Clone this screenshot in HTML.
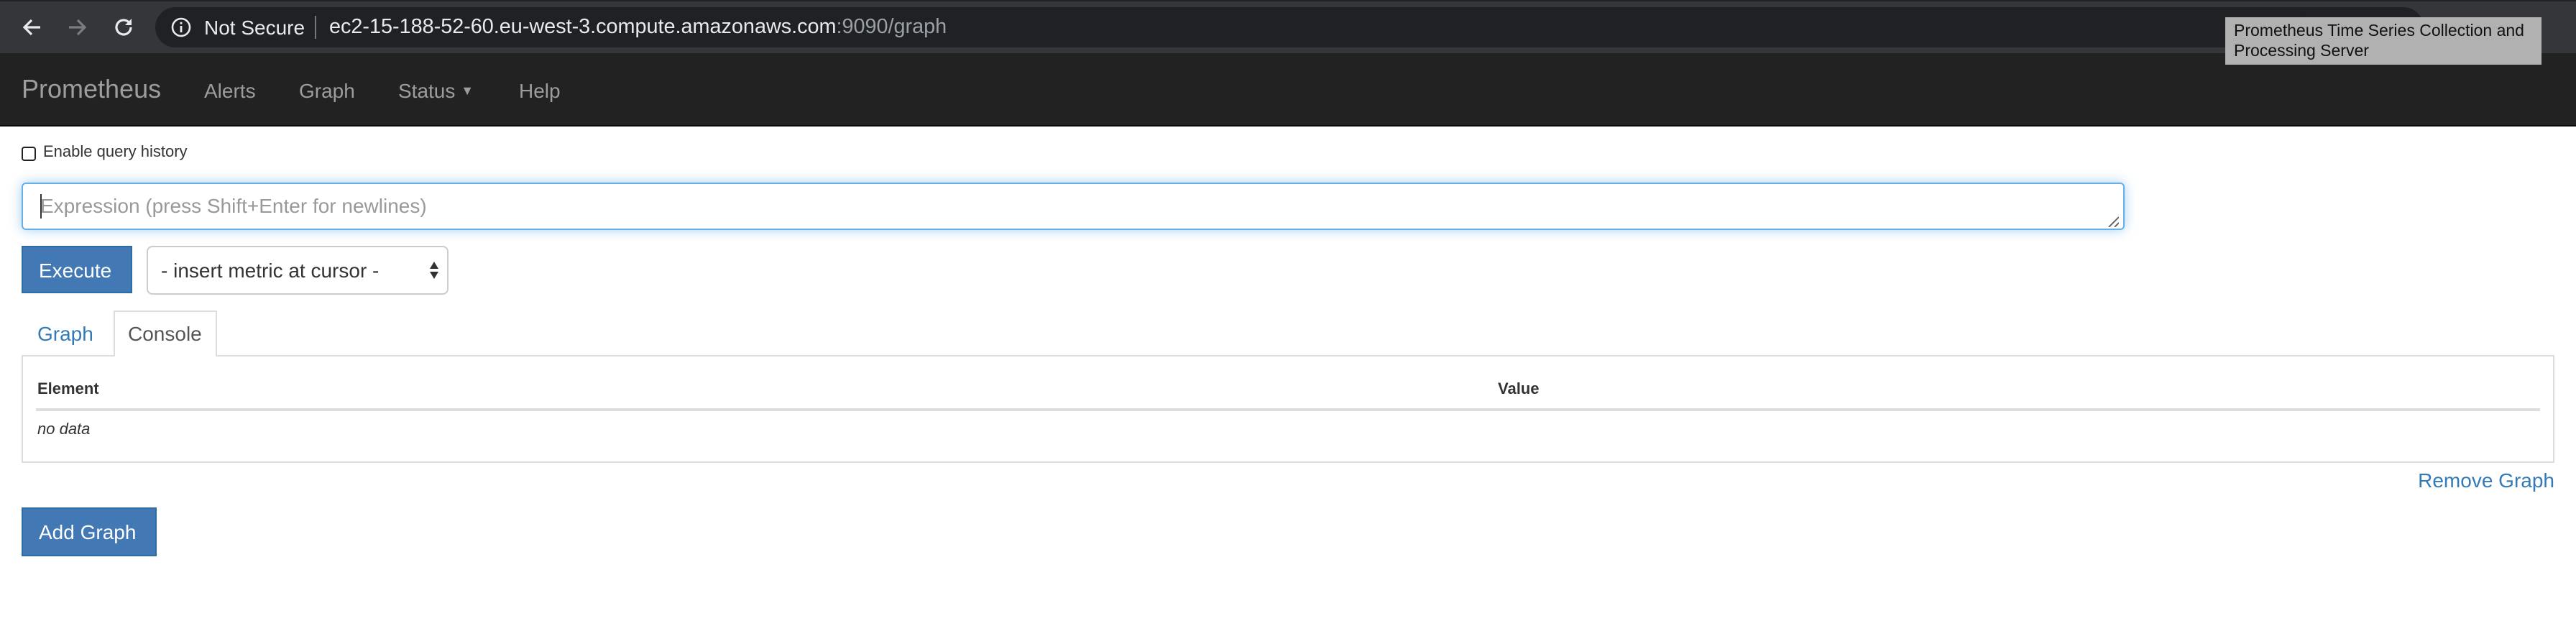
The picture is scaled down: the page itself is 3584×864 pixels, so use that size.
<!DOCTYPE html>
<html><head><meta charset="utf-8"><style>
html,body{margin:0;padding:0;background:#fff;overflow:hidden;width:3584px;height:864px}
#w{position:absolute;left:0;top:0;width:1792px;height:432px;transform:scale(2);transform-origin:0 0;font-family:"Liberation Sans",Arial,sans-serif}
.a{position:absolute;white-space:nowrap}
</style></head><body><div id="w">
<div class="a" style="left:0;top:0;width:1792px;height:37px;background:#35363a"></div>
<div class="a" style="left:0;top:0;width:1792px;height:1px;background:#202124"></div>
<div class="a" style="left:108px;top:5px;width:1515px;height:28px;border-radius:14px;background:#202124"></div>
<div class="a" style="left:1598px;top:5px;width:88px;height:28px;border-radius:14px;background:#202124"></div>
<svg class="a" style="left:14px;top:11px" width="16" height="16" viewBox="0 0 16 16"><path d="M14 8H3M8 3L3 8l5 5" stroke="#e8eaed" stroke-width="1.6" fill="none"/></svg>
<svg class="a" style="left:46px;top:11px" width="16" height="16" viewBox="0 0 16 16"><path d="M2 8h11M8 3l5 5-5 5" stroke="#7b7c7f" stroke-width="1.6" fill="none"/></svg>
<svg class="a" style="left:78px;top:11px" width="16" height="16" viewBox="0 0 16 16"><path d="M13 8a5 5 0 1 1-1.5-3.6" stroke="#e8eaed" stroke-width="1.6" fill="none"/><path d="M13.5 2v4.5H9z" fill="#e8eaed"/></svg>
<svg class="a" style="left:119px;top:12px" width="14" height="14" viewBox="0 0 14 14"><circle cx="7" cy="7" r="6" stroke="#e8eaed" stroke-width="1.3" fill="none"/><rect x="6.3" y="6" width="1.4" height="4.5" fill="#e8eaed"/><rect x="6.3" y="3.4" width="1.4" height="1.4" fill="#e8eaed"/></svg>
<div class="a" style="left:142px;top:11px;font-size:14px;color:#e8eaed">Not Secure</div>
<div class="a" style="left:219px;top:11px;width:1px;height:16px;background:#777"></div>
<div class="a" style="left:229px;top:11px;font-size:14.4px;color:#e8eaed">ec2-15-188-52-60.eu-west-3.compute.amazonaws.com<span style="color:#9aa0a6">:9090/graph</span></div>
<div class="a" style="left:1762px;top:13px;width:3px;height:3px;border-radius:2px;background:#e8eaed;box-shadow:0 4px 0 #e8eaed,0 8px 0 #e8eaed"></div>
<div class="a" style="left:0;top:37px;width:1792px;height:50px;background:#222;border-bottom:1px solid #080808"></div>
<div class="a" style="left:15px;top:52px;font-size:18px;color:#9d9d9d">Prometheus</div>
<div class="a" style="left:142px;top:55px;font-size:14px;color:#9d9d9d">Alerts</div>
<div class="a" style="left:208px;top:55px;font-size:14px;color:#9d9d9d">Graph</div>
<div class="a" style="left:277px;top:55px;font-size:14px;color:#9d9d9d">Status <span style="font-size:9px;position:relative;top:-2px">▼</span></div>
<div class="a" style="left:361px;top:55px;font-size:14px;color:#9d9d9d">Help</div>
<div class="a" style="left:1548px;top:12px;width:220px;height:33px;background:#b1b1b1"></div>
<div class="a" style="left:1554px;top:15px;font-size:11.5px;line-height:14px;color:#111">Prometheus Time Series Collection and<br>Processing Server</div>
<div class="a" style="left:15px;top:102px;width:8px;height:8px;border:1.5px solid #222;border-radius:2px"></div>
<div class="a" style="left:30px;top:100px;font-size:11px;color:#333">Enable query history</div>
<div class="a" style="left:15px;top:127px;width:1461px;height:31px;border:1px solid #66afe9;border-radius:3px;box-shadow:0 0 8px rgba(102,175,233,.6)"></div>
<div class="a" style="left:28px;top:135px;width:1px;height:17px;background:#333"></div>
<div class="a" style="left:28px;top:135px;font-size:14px;color:#999">Expression (press Shift+Enter for newlines)</div>
<svg class="a" style="left:1466px;top:150px" width="8" height="8"><path d="M1 8L8 1M5 8L8 5" stroke="#666" stroke-width="1"/></svg>
<div class="a" style="left:15px;top:171px;width:77px;height:33px;background:#4279b4;border:1px solid #2e6da4;box-sizing:border-box"></div>
<div class="a" style="left:27px;top:180px;font-size:14px;color:#fff">Execute</div>
<div class="a" style="left:102px;top:171px;width:210px;height:34px;border:1px solid #ccc;border-radius:4px;box-sizing:border-box"></div>
<div class="a" style="left:112px;top:180px;font-size:14px;color:#333">- insert metric at cursor -</div>
<svg class="a" style="left:298px;top:181px" width="8" height="14"><path d="M4 1L7 6H1zM4 13L7 8H1z" fill="#333"/></svg>
<div class="a" style="left:26px;top:224px;font-size:14px;color:#337ab7">Graph</div>
<div class="a" style="left:79px;top:216px;width:72px;height:32px;border:1px solid #ddd;border-bottom:none;background:#fff;box-sizing:border-box;z-index:2"></div>
<div class="a" style="left:89px;top:224px;font-size:14px;color:#555;z-index:3">Console</div>
<div class="a" style="left:15px;top:247px;width:1762px;height:75px;border:1px solid #ddd;box-sizing:border-box"></div>
<div class="a" style="left:26px;top:265px;font-size:11px;font-weight:bold;color:#333">Element</div>
<div class="a" style="left:1042px;top:265px;font-size:11px;font-weight:bold;color:#333">Value</div>
<div class="a" style="left:25px;top:284px;width:1742px;height:2px;background:#ddd"></div>
<div class="a" style="left:26px;top:293px;font-size:11px;font-style:italic;color:#333">no data</div>
<div class="a" style="left:1620px;top:326px;width:157px;text-align:right;font-size:14px;color:#337ab7">Remove Graph</div>
<div class="a" style="left:15px;top:353px;width:94px;height:34px;background:#4279b4;border:1px solid #2e6da4;box-sizing:border-box"></div>
<div class="a" style="left:27px;top:362px;font-size:14px;color:#fff">Add Graph</div>
</div></body></html>
